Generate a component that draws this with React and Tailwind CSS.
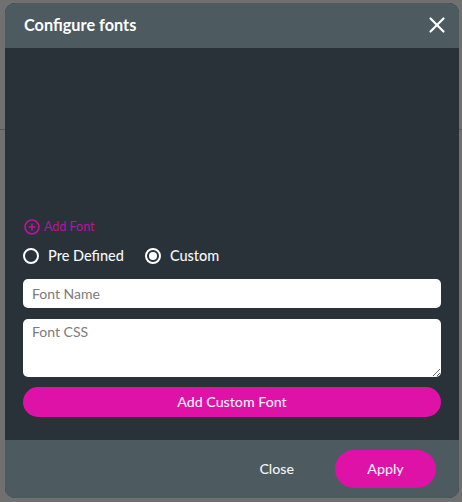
import { useState } from 'react'
import { X } from 'lucide-react'

function Radio({ label, checked, onSelect }) {
  return (
    <button onClick={onSelect} className="flex items-center gap-[9px] text-[14.5px] font-medium text-[#f4f6f7]">
      <span className="w-4 h-4 rounded-full border-2 border-white flex items-center justify-center">
        {checked && <span className="w-2 h-2 rounded-full bg-white" />}
      </span>
      {label}
    </button>
  )
}

export default function App() {
  const [mode, setMode] = useState('custom')

  return (
    <div className="relative w-[462px] h-[502px] overflow-hidden bg-[#707070] pt-[3px] pl-[5px] font-['Lato','Open_Sans',sans-serif]">
      {/* page behind the dialog */}
      <div className="absolute left-0 right-0 top-[129px] h-px bg-[#555555]" />

      <div className="relative w-[454px] h-[495px] rounded-[10px] overflow-hidden flex flex-col bg-[#283238]">
        <div className="h-[45px] shrink-0 bg-[#4d5a60] flex items-center justify-between pl-[19px] pr-[9px]">
          <h2 className="text-[16.3px] font-bold text-white">Configure fonts</h2>
          <button className="text-white pb-[2px]">
            <X size={26} strokeWidth={2} />
          </button>
        </div>

        <div className="flex-1 flex flex-col justify-end px-[18px] pb-[23px]">
          <button className="flex items-center gap-[4px] text-[12.5px] text-[#b5169a] mb-[9px]">
            <svg width="16" height="16" viewBox="0 0 16 16" fill="none" stroke="currentColor" strokeWidth="1.7" className="ml-px">
              <circle cx="8" cy="8" r="7" />
              <path d="M8 4.5v7M4.5 8h7" />
            </svg>
            Add Font
          </button>

          <div className="flex items-center gap-[21px] mb-[12px]">
            <Radio label="Pre Defined" checked={mode === 'predefined'} onSelect={() => setMode('predefined')} />
            <Radio label="Custom" checked={mode === 'custom'} onSelect={() => setMode('custom')} />
          </div>

          <input
            placeholder="Font Name"
            className="h-[29px] w-full shrink-0 rounded-[5px] bg-white px-[9px] text-[14px] text-[#333333] placeholder:text-[#7b7b7b] outline-none"
          />
          <textarea
            placeholder="Font CSS"
            className="mt-[11px] h-[58px] w-full shrink-0 rounded-[5px] bg-white px-[9px] py-[2px] text-[14px] text-[#333333] placeholder:text-[#7b7b7b] outline-none"
          />
          <button className="mt-[10px] h-[30px] w-full shrink-0 rounded-full bg-[#de12a7] pb-[1px] text-[14.2px] font-medium text-[#fdf0fa]">
            Add Custom Font
          </button>
        </div>

        <div className="h-[58px] shrink-0 bg-[#4d5a60] flex items-center justify-end pr-[23px]">
          <button className="mr-[41px] pb-[1px] text-[14.2px] font-medium text-[#f0f3f4]">Close</button>
          <button className="w-[101px] h-[38px] rounded-full bg-[#de12a7] pb-[1px] text-[14.2px] font-medium text-[#fdf0fa]">Apply</button>
        </div>
      </div>
    </div>
  )
}
